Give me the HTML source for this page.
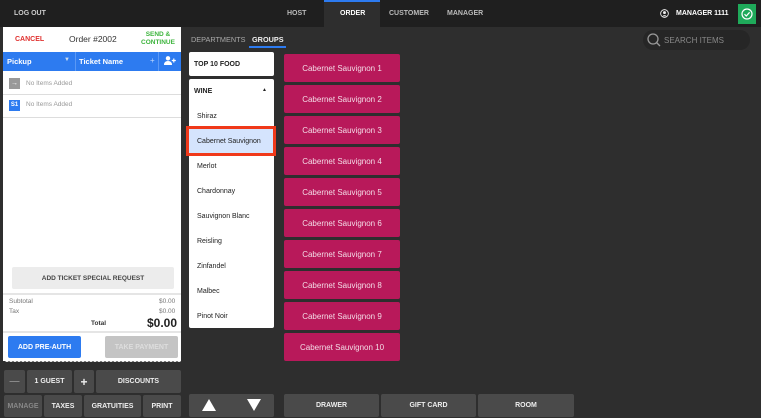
<!DOCTYPE html>
<html><head><style>
*{margin:0;padding:0;box-sizing:border-box}
body{width:761px;height:418px;background:#2e2e2e;font-family:"Liberation Sans",sans-serif;position:relative;overflow:hidden}
.a{position:absolute}
.t{font-size:7px;font-weight:bold;color:#ddd}
.btn{position:absolute;background:#4a4a4a;color:#eee;font-size:7px;font-weight:bold;display:flex;align-items:center;justify-content:center;border-radius:2px}
.pk{position:absolute;left:284px;width:116px;height:28px;background:#b8195a;color:#f3dbe6;font-size:8px;display:flex;align-items:center;justify-content:center;border-radius:2px}
.wi{position:absolute;left:197px;font-size:7px;color:#222}
</style></head><body>
<div class="a" style="left:0;top:0;width:761px;height:27px;background:#1f1f1f"></div>
<div class="a t" style="left:14px;top:10px;color:#ccc">LOG OUT</div>
<div class="a t" style="left:287px;top:10px;color:#bbb">HOST</div>
<div class="a" style="left:324px;top:0;width:56px;height:27px;background:#2e2e2e;border-top:2px solid #2d7bf0"></div>
<div class="a t" style="left:340px;top:10px;color:#fff">ORDER</div>
<div class="a t" style="left:389px;top:10px;color:#bbb">CUSTOMER</div>
<div class="a t" style="left:447px;top:10px;color:#bbb">MANAGER</div>
<svg class="a" style="left:660px;top:9px" width="9" height="9" viewBox="0 0 10 10"><circle cx="5" cy="5" r="4.3" fill="none" stroke="#eee" stroke-width="1"/><circle cx="5" cy="4" r="1.6" fill="#eee"/><path d="M2.5 8 Q5 5.5 7.5 8" fill="#eee"/></svg>
<div class="a t" style="left:676px;top:10px;color:#fff">MANAGER 1111</div>
<div class="a" style="left:738px;top:4px;width:18px;height:20px;background:#1faa5a"></div>
<svg class="a" style="left:741px;top:8px" width="12" height="12" viewBox="0 0 12 12"><circle cx="6" cy="6" r="5" fill="none" stroke="#fff" stroke-width="1.2"/><path d="M3.5 6.2 L5.3 8 L8.6 4.3" fill="none" stroke="#fff" stroke-width="1.2"/></svg>
<div class="a" style="left:643px;top:30px;width:107px;height:20px;border-radius:10px;background:#262626"></div>
<svg class="a" style="left:647px;top:33px" width="14" height="14" viewBox="0 0 14 14"><circle cx="6" cy="6" r="5" fill="none" stroke="#999" stroke-width="1.3"/><path d="M9.5 9.5 L13 13" stroke="#999" stroke-width="1.3"/></svg>
<div class="a" style="left:664px;top:36px;font-size:8px;color:#888">SEARCH ITEMS</div>

<!-- left panel -->
<div class="a" style="left:3px;top:27px;width:178px;height:334px;background:#fff"></div>
<svg class="a" style="left:3px;top:359px" width="178" height="4" viewBox="0 0 178 4"><path d="M0 0 H178 V2 Q176 4 174 2 Q172 4 170 2 Q168 4 166 2 Q164 4 162 2 Q160 4 158 2 Q156 4 154 2 Q152 4 150 2 Q148 4 146 2 Q144 4 142 2 Q140 4 138 2 Q136 4 134 2 Q132 4 130 2 Q128 4 126 2 Q124 4 122 2 Q120 4 118 2 Q116 4 114 2 Q112 4 110 2 Q108 4 106 2 Q104 4 102 2 Q100 4 98 2 Q96 4 94 2 Q92 4 90 2 Q88 4 86 2 Q84 4 82 2 Q80 4 78 2 Q76 4 74 2 Q72 4 70 2 Q68 4 66 2 Q64 4 62 2 Q60 4 58 2 Q56 4 54 2 Q52 4 50 2 Q48 4 46 2 Q44 4 42 2 Q40 4 38 2 Q36 4 34 2 Q32 4 30 2 Q28 4 26 2 Q24 4 22 2 Q20 4 18 2 Q16 4 14 2 Q12 4 10 2 Q8 4 6 2 Q4 4 2 2 L0 2Z" fill="#fff"/></svg>
<div class="a t" style="left:15px;top:36px;color:#e0312f">CANCEL</div>
<div class="a" style="left:69px;top:34px;font-size:8.5px;color:#333">Order #2002</div>
<div class="a t" style="left:141px;top:31px;color:#3cb43c;text-align:center;line-height:8px;font-size:6.5px">SEND &amp;<br>CONTINUE</div>
<div class="a" style="left:3px;top:52px;width:178px;height:19px;background:#2d7bf0"></div>
<div class="a" style="left:75px;top:52px;width:1px;height:19px;background:#5a98f5"></div>
<div class="a" style="left:158px;top:52px;width:1px;height:19px;background:#5a98f5"></div>
<div class="a" style="left:7px;top:57px;font-size:7.5px;font-weight:bold;color:#fff">Pickup</div>
<div class="a" style="left:64px;top:57px;font-size:6px;color:#cde">▼</div>
<div class="a" style="left:79px;top:57px;font-size:7.5px;font-weight:bold;color:#fff">Ticket Name</div>
<div class="a" style="left:150px;top:56px;font-size:8px;color:#bcd6fb">+</div>
<svg class="a" style="left:164px;top:56px" width="12" height="9" viewBox="0 0 12 9"><circle cx="4" cy="2.3" r="2.2" fill="#fff"/><path d="M0 9 Q0 5 4 5 Q8 5 8 9Z" fill="#fff"/><path d="M9.8 2.5 V6.5 M7.8 4.5 H11.8" stroke="#fff" stroke-width="1.2"/></svg>
<div class="a" style="left:9px;top:78px;width:11px;height:11px;background:#999;color:#fff;font-size:7px;text-align:center;line-height:11px">→</div>
<div class="a" style="left:26px;top:80px;font-size:6.5px;color:#999">No Items Added</div>
<div class="a" style="left:3px;top:94px;width:178px;height:1px;background:#ddd"></div>
<div class="a" style="left:9px;top:100px;width:11px;height:11px;background:#2d7bf0;color:#fff;font-size:6px;font-weight:bold;text-align:center;line-height:11px">S1</div>
<div class="a" style="left:26px;top:101px;font-size:6.5px;color:#999">No Items Added</div>
<div class="a" style="left:3px;top:117px;width:178px;height:1px;background:#ddd"></div>
<div class="btn" style="left:12px;top:267px;width:162px;height:22px;background:#ececec;color:#444;font-size:6.5px">ADD TICKET SPECIAL REQUEST</div>
<div class="a" style="left:3px;top:293px;width:178px;height:2px;background:#e5e5e5"></div>
<div class="a" style="left:9px;top:298px;font-size:6.5px;color:#777">Subtotal</div>
<div class="a" style="left:159px;top:298px;font-size:6.5px;color:#777">$0.00</div>
<div class="a" style="left:9px;top:308px;font-size:6.5px;color:#777">Tax</div>
<div class="a" style="left:159px;top:308px;font-size:6.5px;color:#777">$0.00</div>
<div class="a" style="left:91px;top:320px;font-size:6.5px;font-weight:bold;color:#333">Total</div>
<div class="a" style="left:147px;top:316px;font-size:12px;font-weight:bold;color:#222">$0.00</div>
<div class="a" style="left:3px;top:331px;width:178px;height:2px;background:#e5e5e5"></div>
<div class="btn" style="left:8px;top:336px;width:73px;height:22px;background:#2d7bf0;color:#fff">ADD PRE-AUTH</div>
<div class="btn" style="left:105px;top:336px;width:73px;height:22px;background:#c4c4c4;color:#ddd">TAKE PAYMENT</div>

<div class="btn" style="left:4px;top:370px;width:21px;height:23px;color:#888;font-size:10px">—</div>
<div class="btn" style="left:27px;top:370px;width:45px;height:23px">1 GUEST</div>
<div class="btn" style="left:74px;top:370px;width:20px;height:23px;font-size:12px">+</div>
<div class="btn" style="left:96px;top:370px;width:85px;height:23px">DISCOUNTS</div>
<div class="btn" style="left:4px;top:395px;width:38px;height:22px;color:#888">MANAGE</div>
<div class="btn" style="left:44px;top:395px;width:38px;height:22px">TAXES</div>
<div class="btn" style="left:84px;top:395px;width:57px;height:22px">GRATUITIES</div>
<div class="btn" style="left:143px;top:395px;width:38px;height:22px">PRINT</div>

<!-- middle -->
<div class="a" style="left:191px;top:35px;font-size:7.3px;color:#aaa">DEPARTMENTS</div>
<div class="a" style="left:252px;top:35px;font-size:7.3px;font-weight:bold;color:#eee">GROUPS</div>
<div class="a" style="left:249px;top:46px;width:37px;height:2px;background:#2d7bf0"></div>
<div class="a" style="left:189px;top:52px;width:85px;height:24px;background:#fff;border-radius:2px"></div>
<div class="a t" style="left:194px;top:61px;color:#222">TOP 10 FOOD</div>
<div class="a" style="left:189px;top:79px;width:85px;height:249px;background:#fff;border-radius:2px"></div>
<div class="a t" style="left:194px;top:88px;color:#222">WINE</div>
<div class="a" style="left:262px;top:87px;font-size:5px;color:#222">▲</div>
<div class="wi" style="top:113px">Shiraz</div>
<div class="a" style="left:186px;top:126px;width:90px;height:30px;border:3px solid #f0391a;background:#d5e4fd"></div>
<div class="wi" style="top:138px">Cabernet Sauvignon</div>
<div class="wi" style="top:163px">Merlot</div>
<div class="wi" style="top:188px">Chardonnay</div>
<div class="wi" style="top:213px">Sauvignon Blanc</div>
<div class="wi" style="top:238px">Reisling</div>
<div class="wi" style="top:263px">Zinfandel</div>
<div class="wi" style="top:288px">Malbec</div>
<div class="wi" style="top:313px">Pinot Noir</div>

<div class="pk" style="top:54px">Cabernet Sauvignon 1</div>
<div class="pk" style="top:85px">Cabernet Sauvignon 2</div>
<div class="pk" style="top:116px">Cabernet Sauvignon 3</div>
<div class="pk" style="top:147px">Cabernet Sauvignon 4</div>
<div class="pk" style="top:178px">Cabernet Sauvignon 5</div>
<div class="pk" style="top:209px">Cabernet Sauvignon 6</div>
<div class="pk" style="top:240px">Cabernet Sauvignon 7</div>
<div class="pk" style="top:271px">Cabernet Sauvignon 8</div>
<div class="pk" style="top:302px">Cabernet Sauvignon 9</div>
<div class="pk" style="top:333px">Cabernet Sauvignon 10</div>

<div class="btn" style="left:189px;top:394px;width:85px;height:23px"></div>
<svg class="a" style="left:202px;top:399px" width="14" height="12"><path d="M7 0 L14 12 L0 12Z" fill="#fff"/></svg>
<svg class="a" style="left:247px;top:399px" width="14" height="12"><path d="M0 0 L14 0 L7 12Z" fill="#fff"/></svg>
<div class="btn" style="left:284px;top:394px;width:95px;height:23px">DRAWER</div>
<div class="btn" style="left:381px;top:394px;width:95px;height:23px">GIFT CARD</div>
<div class="btn" style="left:478px;top:394px;width:96px;height:23px">ROOM</div>
</body></html>
